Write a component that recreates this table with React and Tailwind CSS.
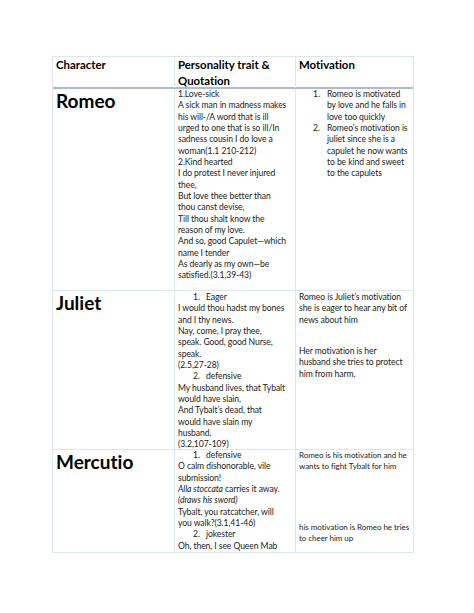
import React from "react";

const font = { fontFamily: "Lato, 'Open Sans', sans-serif" };

const Lines = ({ lines, className = "" }) => (
  <div className={className}>
    {lines.map((l, i) => (
      <div key={i} className="whitespace-nowrap">
        {l}
      </div>
    ))}
  </div>
);

const Num = ({ n, children, indent = "pl-[15px]" }) => (
  <div className={`flex whitespace-nowrap ${indent}`}>
    <span className="w-[13px]">{n}.</span>
    <span>{children}</span>
  </div>
);

export default function App() {
  return (
    <div
      className="w-[474px] h-[613px] bg-white overflow-hidden [font-variant-ligatures:none]"
      style={font}
    >
      <div className="ml-[52px] mt-[56px] w-[362px] border border-[#dfe5ee] text-[#222]">
        {/* Header */}
        <div className="grid grid-cols-[121px_121px_118px] h-[32px] border-b-2 border-[#aebbd0] text-[11.4px] font-bold leading-[15.7px] text-black">
          <div className="px-[3px]">Character</div>
          <div className="px-[3px] border-l border-[#dfe5ee]">
            Personality trait &amp;
            <br />
            Quotation
          </div>
          <div className="px-[3px] border-l border-[#dfe5ee]">Motivation</div>
        </div>

        {/* Romeo */}
        <div className="grid grid-cols-[121px_121px_118px] h-[202px] border-b border-[#dfe5ee] text-[8.6px] tracking-[-0.08px] leading-[11.33px]">
          <div className="px-[3px] pt-[1px] text-[19px] font-bold leading-[22px] tracking-normal text-black">Romeo</div>
          <div className="px-[3px] border-l border-[#dfe5ee]">
            <Lines
              lines={[
                "1.Love-sick",
                "A sick man in madness makes",
                "his will-/A word that is ill",
                "urged to one that is so ill/In",
                "sadness cousin I do love a",
                "woman(1.1 210-212)",
                "2.Kind hearted",
                "I do protest I never injured",
                "thee,",
                "But love thee better than",
                "thou canst devise,",
                "Till thou shalt know the",
                "reason of my love.",
                "And so, good Capulet\u2014which",
                "name I tender",
                "As dearly as my own\u2014be",
                "satisfied.(3.1,39-43)",
              ]}
            />
          </div>
          <div className="border-l border-[#dfe5ee] pl-[17px]">
            <div className="flex">
              <span className="w-[14px]">1.</span>
              <Lines lines={["Romeo is motivated", "by love and he falls in", "love too quickly"]} />
            </div>
            <div className="flex">
              <span className="w-[14px]">2.</span>
              <Lines
                lines={[
                  "Romeo\u2019s motivation is",
                  "juliet since she is a",
                  "capulet he now wants",
                  "to be kind and sweet",
                  "to the capulets",
                ]}
              />
            </div>
          </div>
        </div>

        {/* Juliet */}
        <div className="grid grid-cols-[121px_121px_118px] h-[159px] border-b border-[#dfe5ee] text-[8.6px] tracking-[-0.08px] leading-[11.33px]">
          <div className="px-[3px] pt-[1px] text-[19px] font-bold leading-[22px] tracking-normal text-black">Juliet</div>
          <div className="px-[3px] pt-[1px] border-l border-[#dfe5ee]">
            <Num n={1}>Eager</Num>
            <Lines
              lines={[
                "I would thou hadst my bones",
                "and I thy news.",
                "Nay, come, I pray thee,",
                "speak. Good, good Nurse,",
                "speak.",
                "(2.5,27-28)",
              ]}
            />
            <Num n={2}>defensive</Num>
            <Lines
              lines={[
                "My husband lives, that Tybalt",
                "would have slain,",
                "And Tybalt\u2019s dead, that",
                "would have slain my",
                "husband.",
                "(3.2,107-109)",
              ]}
            />
          </div>
          <div className="px-[3px] pt-[1px] border-l border-[#dfe5ee]">
            <Lines lines={["Romeo is Juliet\u2019s motivation", "she is eager to hear any bit of", "news about him"]} />
            <Lines
              className="mt-[20px]"
              lines={["Her motivation is her", "husband she tries to protect", "him from harm."]}
            />
          </div>
        </div>

        {/* Mercutio */}
        <div className="grid grid-cols-[121px_121px_118px] h-[102px] text-[8.6px] tracking-[-0.08px] leading-[11.33px]">
          <div className="px-[3px] pt-[1px] text-[19px] font-bold leading-[22px] tracking-normal text-black">Mercutio</div>
          <div className="px-[3px] border-l border-[#dfe5ee] overflow-hidden">
            <Num n={1}>defensive</Num>
            <Lines lines={["O calm dishonorable, vile", "submission!"]} />
            <div className="whitespace-nowrap">
              <i>Alla stoccata</i> carries it away.
            </div>
            <div className="whitespace-nowrap italic">(draws his sword)</div>
            <Lines lines={["Tybalt, you ratcatcher, will", "you walk?(3.1,41-46)"]} />
            <Num n={2}>jokester</Num>
            <Lines lines={["Oh, then, I see Queen Mab"]} />
          </div>
          <div className="px-[3px] border-l border-[#dfe5ee] text-[8px] tracking-[-0.05px] leading-[10.7px]">
            <Lines lines={["Romeo is his motivation and he", "wants to fight Tybalt for him"]} />
            <Lines className="mt-[51px]" lines={["his motivation is Romeo he tries", "to cheer him up"]} />
          </div>
        </div>
      </div>
    </div>
  );
}
